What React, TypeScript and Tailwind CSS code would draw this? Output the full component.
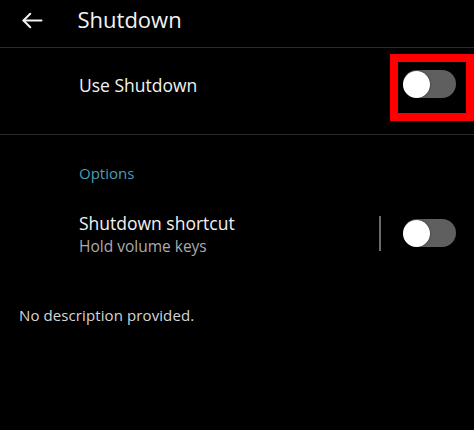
import React from "react";

function Toggle() {
  return (
    <div className="relative h-[28px] w-[53px] rounded-full bg-[#5f5f5f]">
      <div className="absolute left-0 top-[0.5px] h-[27px] w-[27px] rounded-full bg-white shadow-[0_0_2px_rgba(0,0,0,0.6)]" />
    </div>
  );
}

function BackArrow() {
  return (
    <svg width="27" height="27" viewBox="0 0 24 24" fill="none" stroke="#f2f2f2" strokeWidth="1.8" strokeLinecap="round" strokeLinejoin="round">
      <path d="M20 12H4" />
      <path d="M10 6l-6 6 6 6" />
    </svg>
  );
}

export default function App() {
  return (
    <div className="min-h-[430px] w-full bg-black font-['Open_Sans',sans-serif] text-[#f2f2f2]">
      {/* toolbar */}
      <div className="flex h-[48px] items-start border-b border-[#2a2a2a] pl-[18.5px]">
        <div className="mt-[6.5px]">
          <BackArrow />
        </div>
        <h1 className="ml-[32px] mt-[7px] text-[22px] leading-[24px] font-normal">Shutdown</h1>
      </div>

      {/* main switch */}
      <div className="flex h-[87px] items-start border-b border-[#2a2a2a] pl-[79px]">
        <span className="mt-[25px] text-[17.5px] leading-[24px]">Use Shutdown</span>
        <div className="ml-auto mt-[6px] border-[8px] border-[#ff0000] pb-[15px] pl-[5px] pr-[10px] pt-[8px]">
          <Toggle />
        </div>
      </div>

      <div className="pl-[79px] pt-[28px] text-[15px] leading-[20px] text-[#4b9db4]">Options</div>

      <div className="mt-[28px] flex items-start pl-[79px] pr-[18px]">
        <div>
          <div className="text-[17.5px] leading-[24px]">Shutdown shortcut</div>
          <div className="text-[15.5px] leading-[22px] text-[#ababab]">Hold volume keys</div>
        </div>
        <div className="ml-auto mt-[5px] h-[35px] w-[2px] bg-[#6a6a6a]" />
        <div className="ml-[22px] mt-[8px]">
          <Toggle />
        </div>
      </div>

      <p className="mt-[47px] pl-[19px] text-[15px] leading-[22px] tracking-[0.1px] text-[#d6d6d6]">No description provided.</p>
    </div>
  );
}
